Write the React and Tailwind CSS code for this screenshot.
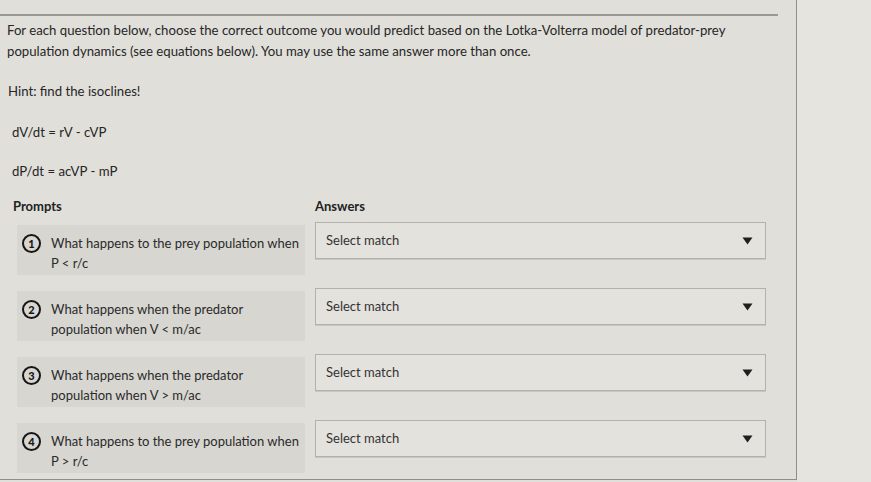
import React from "react";

const PROMPTS = [
    { n: 1, a: "What happens to the prey population when", b: "P < r/c" },
    { n: 2, a: "What happens when the predator", b: "population when V < m/ac" },
    { n: 3, a: "What happens when the predator", b: "population when V > m/ac" },
    { n: 4, a: "What happens to the prey population when", b: "P > r/c" },
];

function Caret() {
    return (
        <svg width="11" height="8" viewBox="0 0 11 8" className="shrink-0">
            <path d="M0.5 0.5 H10.5 L5.5 7.5 Z" fill="#1f1f1f" />
        </svg>
    );
}

function Row({ item }) {
    return (
        <div className="flex items-start">
            <div className="flex h-[50px] w-[288px] items-start gap-[10px] bg-[#d7d6d1] pl-[5px] pt-[8px]">
                <span className="mt-[1px] flex h-[19px] w-[19px] shrink-0 items-center justify-center rounded-full border-[2.5px] border-[#161616] text-[11px] font-black leading-none text-[#161616]">
                    {item.n}
                </span>
                <p className="whitespace-nowrap text-[13px] leading-[20px] text-[#2a2a2a]">
                    {item.a}
                    <br />
                    {item.b}
                </p>
            </div>
            <div className="-mt-[3px] ml-[10px] flex h-[37px] w-[451px] items-center justify-between border border-[#b3b1ac] bg-[#e4e2dd] pl-[10px] pr-[12px] shadow-[0_1px_0_#c9c7c2]">
                <span className="text-[13px] text-[#333]">Select match</span>
                <Caret />
            </div>
        </div>
    );
}

export default function App() {
    return (
        <div
            className="flex h-[482px] w-[871px] overflow-hidden bg-[#e1dfda]"
            style={{ fontFamily: "Lato, 'Noto Sans', sans-serif" }}
        >
            <div className="h-[480px] w-[797px] border-r border-b border-[#8f8e8a]">
                <div className="mt-[14px] w-[778px] border-t-2 border-[#9a9995]" />
                <div className="pt-[4px] text-[13.2px] text-[#262626]">
                    <p className="pl-[7px] leading-[21px]">
                        For each question below, choose the correct outcome you would predict based on the Lotka-Volterra model of predator-prey
                        <br />
                        population dynamics (see equations below). You may use the same answer more than once.
                    </p>
                    <p className="mt-[19px] pl-[8px] leading-[21px]">Hint: find the isoclines!</p>
                    <p className="mt-[20px] pl-[12px] leading-[21px]">dV/dt = rV - cVP</p>
                    <p className="mt-[18px] pl-[12px] leading-[21px]">dP/dt = acVP - mP</p>
                    <div className="mt-[14px] flex pl-[13px] text-[13px] font-bold leading-[21px] text-[#222]">
                        <span className="w-[302px]">Prompts</span>
                        <span>Answers</span>
                    </div>
                </div>
                <div className="mt-[8px] flex flex-col gap-[16px] pl-[17px]">
                    {PROMPTS.map((item) => (
                        <Row key={item.n} item={item} />
                    ))}
                </div>
            </div>
            <div className="flex-1 bg-[#e5e4df]" />
        </div>
    );
}
